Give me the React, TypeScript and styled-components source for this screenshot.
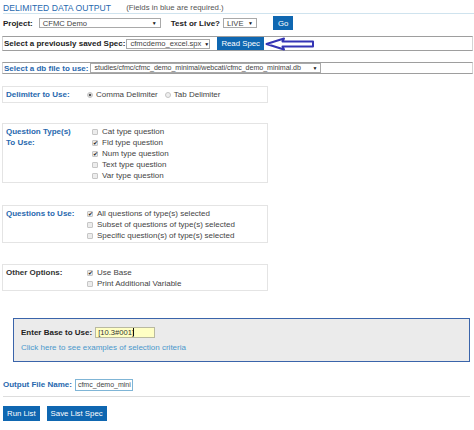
import * as React from 'react'
import styled, {createGlobalStyle} from 'styled-components'

const GlobalStyle = createGlobalStyle`
    html, body {
        margin: 0;
        padding: 0;
        background: #ffffff;
    }
    body {
        font-family: 'Liberation Sans', Arial, sans-serif;
        font-size: 8px;
        color: #222222;
    }
`

const BLUE = '#2768ae'

type CheckItem = {label: string; checked?: boolean}

const questionTypes: CheckItem[] = [
    {label: 'Cat type question'},
    {label: 'Fld type question', checked: true},
    {label: 'Num type question', checked: true},
    {label: 'Text type question'},
    {label: 'Var type question'},
]

const questionsToUse: CheckItem[] = [
    {label: 'All questions of type(s) selected', checked: true},
    {label: 'Subset of questions of type(s) selected'},
    {label: 'Specific question(s) of type(s) selected'},
]

const otherOptions: CheckItem[] = [
    {label: 'Use Base', checked: true},
    {label: 'Print Additional Variable'},
]

const Arrow = () => (
    <svg width="50" height="14" viewBox="0 0 50 14">
        <path
            d="M1.5 7 L19 1.5 L17.5 4.5 L48 4.5 L48 9.5 L17.5 9.5 L19 12.5 Z"
            fill="#ffffff"
            stroke="#3434b4"
            strokeWidth="2"
            strokeLinejoin="round"
        />
    </svg>
)

const CheckList = ({items}: {items: CheckItem[]}) => (
    <Options>
        {items.map((item) => (
            <OptionRow key={item.label}>
                <Box>{item.checked ? '✔' : ''}</Box>
                {item.label}
            </OptionRow>
        ))}
    </Options>
)

export default function App() {
    return (
        <Page>
            <GlobalStyle />
            <TitleBar>
                <Title>DELIMITED DATA OUTPUT</Title>
                <Hint>(Fields in blue are required.)</Hint>
            </TitleBar>

            <ProjectRow>
                <Label>Project:</Label>
                <Select $width={122} $left={6}>
                    <span>CFMC Demo</span>
                    <Caret>▼</Caret>
                </Select>
                <Label style={{marginLeft: 10}}>Test or Live?</Label>
                <Select $width={34} $left={3}>
                    <span>LIVE</span>
                    <Caret>▼</Caret>
                </Select>
                <Button $left={16} $height={14} $pad={5}>Go</Button>
            </ProjectRow>

            <BarBox $top={6} $height={13}>
                <Label>Select a previously saved Spec:</Label>
                <Select $width={84} $left={1}>
                    <span>cfmcdemo_excel.spx</span>
                    <Caret>▼</Caret>
                </Select>
                <Button $left={7} $height={13} $pad={4}>Read Spec</Button>
                <ArrowWrap>
                    <Arrow />
                </ArrowWrap>
            </BarBox>

            <BarBox $top={11} $height={10}>
                <BlueLabel>Select a db file to use:</BlueLabel>
                <Select $width={231} $left={2}>
                    <DbText>studies/cfmc/cfmc_demo_minimal/webcati/cfmc_demo_minimal.db</DbText>
                    <Caret>▼</Caret>
                </Select>
            </BarBox>

            <Section $top={12} $height={17}>
                <SectionLabel>Delimiter to Use:</SectionLabel>
                <RadioGroup>
                    <Radio $on />
                    Comma Delimiter
                    <Radio style={{marginLeft: 4}} />
                    Tab Delimiter
                </RadioGroup>
            </Section>

            <Section $top={20} $height={60}>
                <SectionLabel style={{width: 86}}>
                    Question Type(s)
                    <br />
                    To Use:
                </SectionLabel>
                <CheckList items={questionTypes} />
            </Section>

            <Section $top={22} $height={38}>
                <SectionLabel>Questions to Use:</SectionLabel>
                <CheckList items={questionsToUse} />
            </Section>

            <Section $top={21} $height={27}>
                <SectionLabel $dark>Other Options:</SectionLabel>
                <CheckList items={otherOptions} />
            </Section>

            <BasePanel>
                <BaseRow>
                    <Label>Enter Base to Use:</Label>
                    <BaseInput>
                        [10.3#001]
                        <CursorMark />
                    </BaseInput>
                </BaseRow>
                <Link>Click here to see examples of selection criteria</Link>
            </BasePanel>

            <OutputRow>
                <BlueLabel>Output File Name:</BlueLabel>
                <FileInput>cfmc_demo_mini</FileInput>
            </OutputRow>

            <Rule />

            <Actions>
                <Button $left={0} $height={15} $pad={4}>Run List</Button>
                <Button $left={7} $height={15} $pad={4}>Save List Spec</Button>
            </Actions>
        </Page>
    )
}

const Page = styled('div')`
    width: 474px;
    height: 430px;
    overflow: hidden;
    display: flex;
    flex-direction: column;
`

const TitleBar = styled('div')`
    height: 11px;
    margin: 2px 0 0 3px;
    border-bottom: 1px solid #cfe3ee;
    display: flex;
    align-items: center;
`

const Title = styled('div')`
    color: ${BLUE};
    font-size: 8.6px;
    letter-spacing: 0.05px;
`

const Hint = styled('div')`
    color: #555555;
    font-size: 7.8px;
    margin-left: 15px;
`

const ProjectRow = styled('div')`
    height: 14px;
    margin: 2px 0 0 3px;
    display: flex;
    align-items: center;
`

const Label = styled('span')`
    font-weight: bold;
    color: #222222;
    white-space: nowrap;
`

const BlueLabel = styled(Label)`
    color: ${BLUE};
`

const Select = styled('div')<{$width: number; $left: number}>`
    width: ${(p) => p.$width}px;
    height: 10px;
    margin-left: ${(p) => p.$left}px;
    box-sizing: border-box;
    border: 1px solid #a9a9a9;
    background: #ffffff;
    color: #444444;
    font-size: 7.6px;
    padding: 0 3px 0 3px;
    display: flex;
    align-items: center;
    justify-content: space-between;
    white-space: nowrap;
    overflow: hidden;
`

const DbText = styled('span')`
    font-size: 7.1px;
    letter-spacing: -0.05px;
`

const Caret = styled('span')`
    font-size: 5px;
    color: #111111;
    margin-left: 3px;
`

const Button = styled('div')<{$left: number; $height: number; $pad: number}>`
    margin-left: ${(p) => p.$left}px;
    height: ${(p) => p.$height}px;
    padding: 0 ${(p) => p.$pad}px;
    background: #0f67b1;
    color: #ffffff;
    font-size: 7.8px;
    display: flex;
    align-items: center;
    white-space: nowrap;
`

const BarBox = styled('div')<{$top: number; $height: number}>`
    margin: ${(p) => p.$top}px 1px 0 2px;
    height: ${(p) => p.$height}px;
    border: 1px solid #d4d4d4;
    border-top: 1px solid #9e9e9e;
    border-bottom: 1px solid #9e9e9e;
    padding-left: 1px;
    display: flex;
    align-items: center;
`

const ArrowWrap = styled('div')`
    display: flex;
    align-items: center;
    margin-left: 1px;
`

const Section = styled('div')<{$top: number; $height: number}>`
    margin: ${(p) => p.$top}px 0 0 2px;
    width: 266px;
    height: ${(p) => p.$height}px;
    box-sizing: border-box;
    border: 1px solid #e4e4e4;
    padding: 2px 0 0 3px;
    display: flex;
    align-items: flex-start;
`

const SectionLabel = styled('div')<{$dark?: boolean}>`
    width: 81px;
    flex: none;
    font-weight: bold;
    color: ${(p) => (p.$dark ? '#333333' : BLUE)};
    line-height: 11px;
`

const RadioGroup = styled('div')`
    display: flex;
    align-items: center;
    height: 11px;
    color: #444444;
    gap: 3px;
`

const Radio = styled('span')<{$on?: boolean}>`
    width: 6px;
    height: 6px;
    box-sizing: border-box;
    border-radius: 50%;
    border: 1px solid #c4c4c4;
    background: ${(p) => (p.$on ? 'radial-gradient(circle, #555 0 1.4px, #e2e2e2 1.6px)' : '#eeeeee')};
`

const Options = styled('div')`
    display: flex;
    flex-direction: column;
`

const OptionRow = styled('div')`
    height: 11px;
    display: flex;
    align-items: center;
    gap: 4px;
    color: #444444;
    white-space: nowrap;
`

const Box = styled('span')`
    width: 6px;
    height: 6px;
    box-sizing: border-box;
    border: 1px solid #c6c6c6;
    border-radius: 1px;
    background: #ececec;
    font-size: 6px;
    line-height: 4px;
    color: #222222;
    display: flex;
    align-items: center;
    justify-content: center;
`

const BasePanel = styled('div')`
    margin: 27px 4px 0 13px;
    height: 44px;
    box-sizing: border-box;
    border: 1px solid #3a64aa;
    background: #ebebeb;
    padding: 7px 0 0 7px;
    display: flex;
    flex-direction: column;
`

const BaseRow = styled('div')`
    display: flex;
    align-items: center;
    height: 12px;
`

const BaseInput = styled('div')`
    margin-left: 3px;
    width: 60px;
    height: 11px;
    box-sizing: border-box;
    border: 1px solid #b9b9a0;
    background: #ffffc4;
    color: #333333;
    font-size: 7.6px;
    padding-left: 2px;
    display: flex;
    align-items: center;
`

const CursorMark = styled('span')`
    width: 1px;
    height: 8px;
    background: #111111;
    margin-left: -1px;
`

const Link = styled('div')`
    margin-top: 5px;
    color: #4a98cc;
`

const OutputRow = styled('div')`
    margin: 16px 0 0 3px;
    height: 13px;
    display: flex;
    align-items: center;
`

const FileInput = styled('div')`
    margin-left: 3px;
    width: 58px;
    height: 12px;
    box-sizing: border-box;
    border: 1px solid #7fb5d6;
    color: #444444;
    font-size: 7px;
    padding-left: 2px;
    display: flex;
    align-items: center;
    overflow: hidden;
    white-space: nowrap;
`

const Rule = styled('div')`
    margin: 5px 4px 0 3px;
    border-top: 1px solid #dddddd;
`

const Actions = styled('div')`
    margin: 9px 0 0 3px;
    display: flex;
`
